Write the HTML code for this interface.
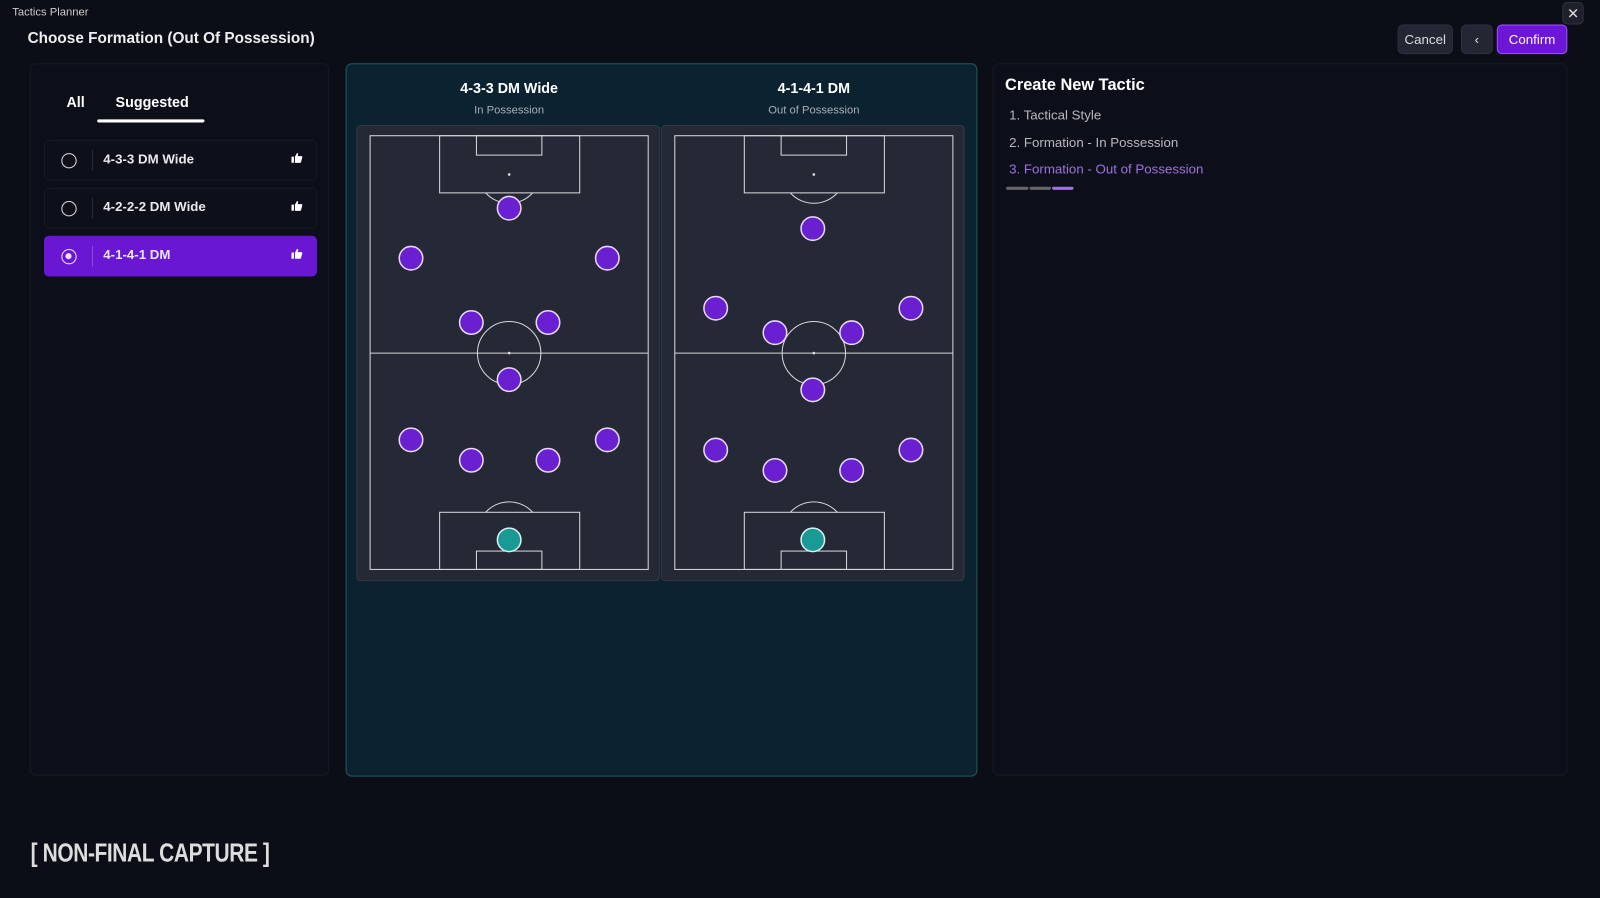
<!DOCTYPE html>
<html><head><meta charset="utf-8"><style>
*{margin:0;padding:0;box-sizing:border-box}
html,body{width:1600px;height:898px;overflow:hidden;background:#0b0d17;font-family:"Liberation Sans",sans-serif;color:#fff}
#w{position:absolute;left:0;top:0;width:1565px;height:880px;transform-origin:0 0;transform:scale(1.0224,1.0205)}
.a{position:absolute}
.panel{position:absolute;border:1px solid #161a26;border-radius:6px;background:#0c0f1a}
.row{position:absolute;left:43px;width:267px;height:40px;border:1px solid #161a26;border-radius:5px;background:#0d101b}
.row .r{position:absolute;left:16px;top:12px;width:15px;height:15px;border:1.5px solid #ddd;border-radius:50%}
.row .sep{position:absolute;left:46px;top:9px;width:1px;height:20px;background:#2a2e3a}
.row .t{position:absolute;left:57px;top:10px;font-size:13px;font-weight:bold;color:#e8e8ee}
.row svg{position:absolute;right:13px;top:11px}
.btn{position:absolute;top:24px;height:29px;border-radius:5px;background:#232633;border:1px solid #2e3240;font-size:13px;color:#ddd;text-align:center;line-height:27px}
</style></head><body><div id="w">
<div class="a" style="left:12px;top:6px;font-size:11px;color:#ccc">Tactics Planner</div>
<div class="a" style="left:27px;top:29px;font-size:15px;font-weight:bold;color:#eee">Choose Formation (Out Of Possession)</div>
<div class="btn" style="left:1367px;width:54px">Cancel</div>
<div class="btn" style="left:1429px;width:31px">&#8249;</div>
<div class="btn" style="left:1464px;width:69px;background:#6d16d8;border-color:#9a52ff;color:#fff">Confirm</div>
<div class="btn" style="left:1528px;top:2px;width:21px;height:22px;line-height:20px;font-size:14px;background:#1e212c">✕</div>

<div class="panel" style="left:29px;top:62px;width:293px;height:698px"></div>
<div class="a" style="left:65px;top:92px;font-size:14px;font-weight:bold">All</div>
<div class="a" style="left:113px;top:92px;font-size:14px;font-weight:bold">Suggested</div>
<div class="a" style="left:95px;top:117px;width:105px;height:3px;background:#fff;border-radius:2px"></div>
<div class="row" style="top:137px"><div class="r"></div><div class="sep"></div><div class="t">4-3-3 DM Wide</div><svg width="11" height="11" viewBox="0 0 11 11"><rect x="0" y="4.5" width="2.5" height="6" fill="#fff"/><path d="M3.5 4.5 L5.5 1 Q6.8 0.6 6.6 2.2 L6.2 4 L10 4 Q11 4.3 10.6 5.5 L9.4 10 Q9 10.6 8.3 10.6 L3.5 10.6Z" fill="#fff"/></svg></div>
<div class="row" style="top:184px"><div class="r"></div><div class="sep"></div><div class="t">4-2-2-2 DM Wide</div><svg width="11" height="11" viewBox="0 0 11 11"><rect x="0" y="4.5" width="2.5" height="6" fill="#fff"/><path d="M3.5 4.5 L5.5 1 Q6.8 0.6 6.6 2.2 L6.2 4 L10 4 Q11 4.3 10.6 5.5 L9.4 10 Q9 10.6 8.3 10.6 L3.5 10.6Z" fill="#fff"/></svg></div>
<div class="row" style="top:231px;background:#6a17d4;border-color:#6a17d4"><div class="r" style="border-color:#f0e0ff"><div style="position:absolute;left:3px;top:3px;width:6px;height:6px;border-radius:50%;background:#f0e0ff"></div></div><div class="sep" style="background:#8a4ae0"></div><div class="t">4-1-4-1 DM</div><svg width="11" height="11" viewBox="0 0 11 11"><rect x="0" y="4.5" width="2.5" height="6" fill="#fff"/><path d="M3.5 4.5 L5.5 1 Q6.8 0.6 6.6 2.2 L6.2 4 L10 4 Q11 4.3 10.6 5.5 L9.4 10 Q9 10.6 8.3 10.6 L3.5 10.6Z" fill="#fff"/></svg></div>

<div class="panel" style="left:338px;top:62px;width:618px;height:699px;background:#0b2330;border-color:#1f5b5c"></div>
<div class="a" style="left:349px;top:78px;width:298px;text-align:center;font-size:14px;font-weight:bold">4-3-3 DM Wide</div>
<div class="a" style="left:349px;top:102px;width:298px;text-align:center;font-size:11px;color:#aab">In Possession</div>
<div class="a" style="left:647px;top:78px;width:298px;text-align:center;font-size:14px;font-weight:bold">4-1-4-1 DM</div>
<div class="a" style="left:647px;top:102px;width:298px;text-align:center;font-size:11px;color:#aab">Out of Possession</div>

<svg class="a" style="left:0;top:0" width="1565" height="880">
<defs><g id="p">
<rect x="-13" y="-10" width="296" height="446" rx="4" fill="#252835" stroke="#343844"/>
<g fill="none" stroke="#d8d8de" stroke-width="1">
<rect x="0" y="0" width="272" height="425"/>
<line x1="0" y1="213" x2="272" y2="213"/>
<circle cx="136" cy="213" r="31"/>
<rect x="68" y="0" width="137" height="56"/><rect x="104" y="0" width="64" height="19"/>
<path d="M113 56 A31 31 0 0 0 159 56"/>
<rect x="68" y="369" width="137" height="56"/><rect x="104" y="407" width="64" height="18"/>
<path d="M113 369 A31 31 0 0 1 159 369"/>
</g><circle cx="136" cy="38" r="1.3" fill="#ddd"/><circle cx="136" cy="213" r="1.3" fill="#ddd"/>
</g></defs>
<use href="#p" x="362" y="133"/><use href="#p" x="660" y="133"/>
<g fill="#6a1fd0" stroke="#ead8ff" stroke-width="1.5">
<circle cx="498" cy="204" r="11.5"/><circle cx="402" cy="253" r="11.5"/><circle cx="594" cy="253" r="11.5"/>
<circle cx="461" cy="316" r="11.5"/><circle cx="536" cy="316" r="11.5"/><circle cx="498" cy="372" r="11.5"/>
<circle cx="402" cy="431" r="11.5"/><circle cx="461" cy="451" r="11.5"/><circle cx="536" cy="451" r="11.5"/><circle cx="594" cy="431" r="11.5"/>
<circle cx="795" cy="224" r="11.5"/><circle cx="700" cy="302" r="11.5"/><circle cx="891" cy="302" r="11.5"/>
<circle cx="758" cy="326" r="11.5"/><circle cx="833" cy="326" r="11.5"/><circle cx="795" cy="382" r="11.5"/>
<circle cx="700" cy="441" r="11.5"/><circle cx="758" cy="461" r="11.5"/><circle cx="833" cy="461" r="11.5"/><circle cx="891" cy="441" r="11.5"/>
</g>
<g fill="#1a9a96" stroke="#d8f0ee" stroke-width="1.5"><circle cx="498" cy="529" r="11.5"/><circle cx="795" cy="529" r="11.5"/></g>
</svg>

<div class="panel" style="left:971px;top:62px;width:562px;height:698px"></div>
<div class="a" style="left:983px;top:75px;font-size:16px;font-weight:bold">Create New Tactic</div>
<div class="a" style="left:987px;top:105px;font-size:13px;color:#b8b8c0">1. Tactical Style</div>
<div class="a" style="left:987px;top:132px;font-size:13px;color:#b8b8c0">2. Formation - In Possession</div>
<div class="a" style="left:987px;top:158px;font-size:13px;color:#a070e0">3. Formation - Out of Possession</div>
<div class="a" style="left:984px;top:183px;width:22px;height:3px;border-radius:2px;background:#666"></div>
<div class="a" style="left:1007px;top:183px;width:21px;height:3px;border-radius:2px;background:#666"></div>
<div class="a" style="left:1029px;top:183px;width:21px;height:3px;border-radius:2px;background:#a070e0"></div>

<div class="a" style="left:30px;top:822px;font-size:25px;font-weight:bold;color:#ddd;transform:scaleX(0.82);transform-origin:0 0;letter-spacing:-0.5px">[ NON-FINAL CAPTURE ]</div>
</div></body></html>
